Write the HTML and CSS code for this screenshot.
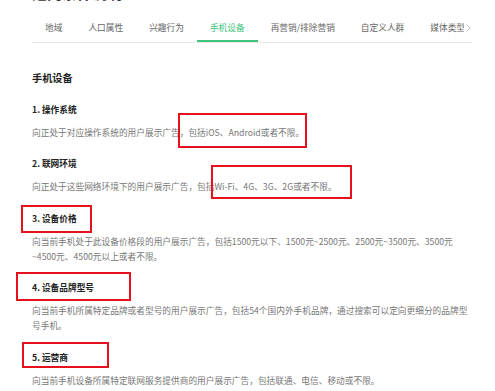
FILE: index.html
```html
<!DOCTYPE html>
<html>
<head>
  <meta charset="utf-8">
  <title>定向说明</title>
  <link rel="stylesheet" href="styles.css">
</head>
<body>
  <div class="page">
    <h1 class="page-title">定向条件说明</h1>

    <div class="tabs">
      <div class="tab-list">
        <div class="tab">地域</div>
        <div class="tab">人口属性</div>
        <div class="tab">兴趣行为</div>
        <div class="tab active">手机设备</div>
        <div class="tab">再营销/排除营销</div>
        <div class="tab">自定义人群</div>
        <div class="tab">媒体类型</div>
      </div>
      <div class="tab-next">
        <svg width="5" height="8" viewBox="0 0 5 8"><path d="M0.8 0.6 L4.2 4 L0.8 7.4" fill="none" stroke="#bbb" stroke-width="1"/></svg>
      </div>
    </div>

    <div class="content">
      <h2>手机设备</h2>

      <h3>1. 操作系统</h3>
      <p>向正处于对应操作系统的用户展示广告，包括iOS、Android或者不限。</p>

      <h3>2. 联网环境</h3>
      <p>向正处于这些网络环境下的用户展示广告，包括Wi-Fi、4G、3G、2G或者不限。</p>

      <h3>3. 设备价格</h3>
      <p>向当前手机处于此设备价格段的用户展示广告，包括1500元以下、1500元~2500元、2500元~3500元、3500元~4500元、4500元以上或者不限。</p>

      <h3>4. 设备品牌型号</h3>
      <p>向当前手机所属特定品牌或者型号的用户展示广告，包括54个国内外手机品牌，通过搜索可以定向更细分的品牌型号手机。</p>

      <h3>5. 运营商</h3>
      <p>向当前手机设备所属特定联网服务提供商的用户展示广告，包括联通、电信、移动或不限。</p>
    </div>
  </div>

  <!-- annotation boxes drawn over the screenshot -->
  <div class="mark mark-os"></div>
  <div class="mark mark-net"></div>
  <div class="mark mark-price"></div>
  <div class="mark mark-brand"></div>
  <div class="mark mark-carrier"></div>
</body>
</html>
```

FILE: styles.css
```css
body {
  margin: 0;
  background: #fff;
  font-family: "Noto Sans CJK SC", "Liberation Sans", sans-serif;
  color: #333;
  overflow: hidden;
}

.page {
  width: 440px;
  padding-left: 32px;
}

.page-title {
  margin: -17px 0 0;
  font-size: 15px;
  line-height: 20px;
  font-weight: bold;
  color: #333;
}

.tabs {
  display: flex;
  margin-top: 17px;
  border-bottom: 1px solid #e8e8e8;
}

.tab-list {
  display: flex;
  width: 432px;
  overflow: hidden;
}

.tab {
  flex-shrink: 0;
  padding: 0 13px 6px;
  font-size: 8.7px;
  line-height: 16px;
  color: #666;
  white-space: nowrap;
}

.tab.active {
  color: #3cc47a;
  box-shadow: inset 0 -2px 0 #3cc47a;
}

.tab-next {
  flex: 1;
  display: flex;
  justify-content: center;
  padding-top: 4px;
}

.content h2 {
  margin: 28px 0 0;
  font-size: 10.2px;
  line-height: 14px;
  font-weight: bold;
  color: #222;
}

.content h3 {
  margin: 16.5px 0 0;
  font-size: 8.7px;
  line-height: 15px;
  font-weight: bold;
  color: #222;
}

.content p {
  margin: 8px 0 0;
  font-size: 8.7px;
  line-height: 15px;
  color: #777;
}

.mark {
  position: absolute;
  border: 2px solid #e8101c;
  box-sizing: border-box;
}

.mark-os { left: 178px; top: 113px; width: 129px; height: 35px; }
.mark-net { left: 211px; top: 165px; width: 141px; height: 34px; }
.mark-price { left: 21px; top: 205px; width: 71px; height: 28px; }
.mark-brand { left: 16px; top: 272px; width: 115px; height: 29px; }
.mark-carrier { left: 22px; top: 342px; width: 87px; height: 26px; }
```
